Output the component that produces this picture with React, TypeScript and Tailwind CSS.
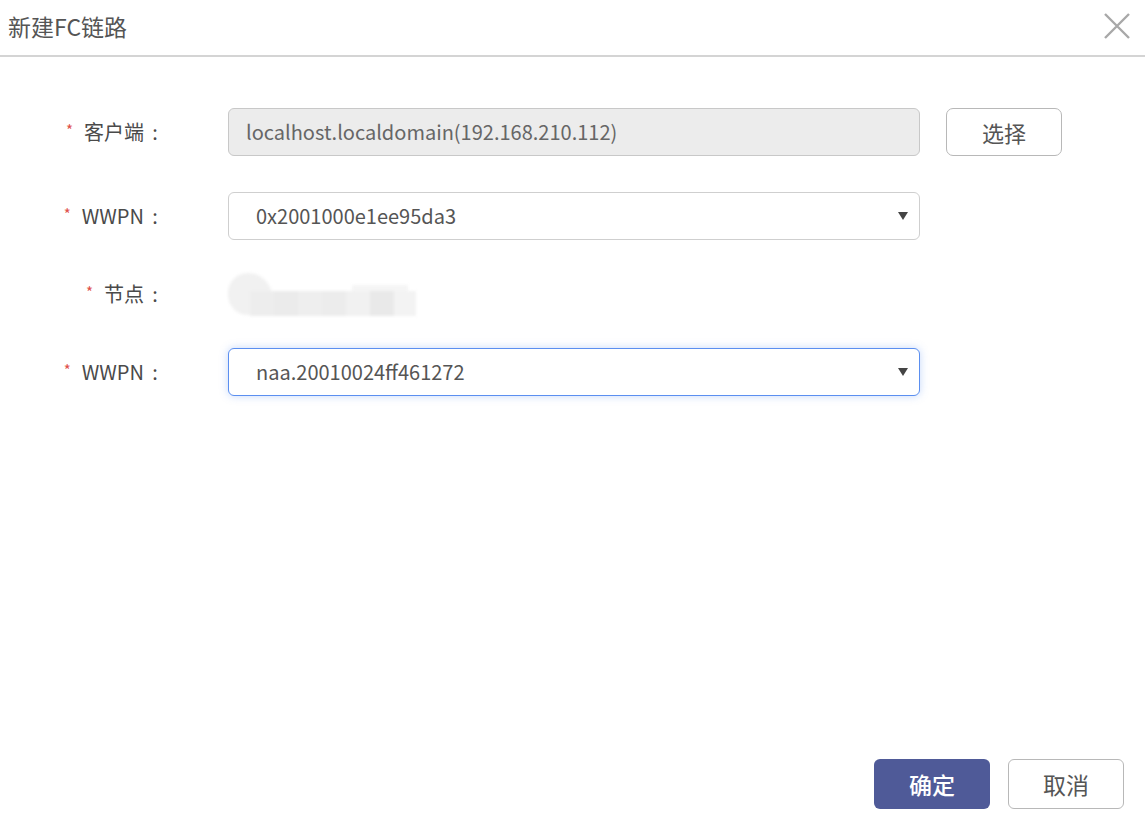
import React from 'react'

const font = { fontFamily: '"Noto Sans CJK SC", "Noto Sans", sans-serif' }

const Caret = () => (
    <svg width="10" height="8" viewBox="0 0 10 8" className="absolute right-[11px] top-1/2 -translate-y-1/2">
        <path d="M0 0 H10 L5 8 Z" fill="#444" />
    </svg>
)

const Label = ({ text }: { text: string }) => (
    <div className="w-[166px] shrink-0 flex items-center justify-end text-[20px] text-[#4a4a4a] leading-none">
        <span className="text-[#e0504a] text-[15px] mr-[11px] relative -top-[3px]">*</span>
        <span>{text}</span>
        <span className="inline-block w-[22px] text-center">:</span>
    </div>
)

const Blurred = () => (
    <div className="relative h-[46px] w-[200px] blur-[1.5px]">
        <div className="absolute left-0 top-[2px] h-[42px] w-[44px] rounded-l-[20px] rounded-tr-[24px] bg-[#f1f1f1]" />
        <div className="absolute left-[22px] top-[20px] h-[25px] w-[24px] bg-[#ededed]" />
        <div className="absolute left-[46px] top-[20px] h-[25px] w-[24px] bg-[#ebebeb]" />
        <div className="absolute left-[70px] top-[20px] h-[25px] w-[24px] bg-[#eeeeee]" />
        <div className="absolute left-[94px] top-[20px] h-[25px] w-[24px] bg-[#ececec]" />
        <div className="absolute left-[118px] top-[20px] h-[25px] w-[24px] bg-[#f1f1f1]" />
        <div className="absolute left-[142px] top-[20px] h-[25px] w-[24px] bg-[#e9e9e9]" />
        <div className="absolute left-[166px] top-[20px] h-[25px] w-[22px] bg-[#f3f3f3]" />
        <div className="absolute left-[124px] top-[14px] h-[6px] w-[56px] bg-[#f5f5f5]" />
    </div>
)

export default function App() {
    return (
        <div style={font} className="w-[1145px] h-[834px] bg-white flex flex-col">
            <div className="h-[57px] shrink-0 flex items-center justify-between border-b-2 border-[#d4d4d4] pl-[8px] pr-[14px]">
                <span className="text-[23px] text-[#555] relative -top-[1px]">新建FC链路</span>
                <svg width="28" height="28" viewBox="0 0 28 28" className="relative -top-[2px]">
                    <path d="M2 2 L26 26 M26 2 L2 26" stroke="#a8a8a8" strokeWidth="2.4" />
                </svg>
            </div>

            <div className="flex flex-col pt-[51px]">
                <div className="flex items-center h-[48px]">
                    <Label text="客户端" />
                    <div className="ml-[62px] w-[692px] h-[48px] flex items-center rounded-[6px] border border-[#c8c8c8] bg-[#ececec] pl-[17px] text-[20px] text-[#666]">
                        localhost.localdomain(192.168.210.112)
                    </div>
                    <button className="ml-[26px] w-[116px] h-[48px] rounded-[7px] border border-[#b8b8b8] bg-white text-[22px] text-[#555]">
                        选择
                    </button>
                </div>

                <div className="flex items-center h-[48px] mt-[36px]">
                    <Label text="WWPN" />
                    <div className="relative ml-[62px] w-[692px] h-[48px] flex items-center rounded-[6px] border border-[#cfcfcf] bg-white pl-[27px] text-[20px] text-[#555]">
                        0x2001000e1ee95da3
                        <Caret />
                    </div>
                </div>

                <div className="flex items-center h-[36px] mt-[36px]">
                    <Label text="节点" />
                    <div className="ml-[62px]">
                        <Blurred />
                    </div>
                </div>

                <div className="flex items-center h-[48px] mt-[36px]">
                    <Label text="WWPN" />
                    <div className="relative ml-[62px] w-[692px] h-[48px] flex items-center rounded-[6px] border border-[#5b8ff0] bg-white pl-[27px] text-[20px] text-[#555] shadow-[0_0_8px_rgba(91,143,240,0.35)]">
                        naa.20010024ff461272
                        <Caret />
                    </div>
                </div>
            </div>

            <div className="mt-auto flex justify-end gap-[18px] pr-[21px] pb-[25px]">
                <button className="w-[116px] h-[50px] rounded-[6px] bg-[#4f5a98] text-white text-[23px] font-medium">
                    确定
                </button>
                <button className="w-[116px] h-[50px] rounded-[6px] border border-[#b8b8b8] bg-white text-[#555] text-[23px]">
                    取消
                </button>
            </div>
        </div>
    )
}
